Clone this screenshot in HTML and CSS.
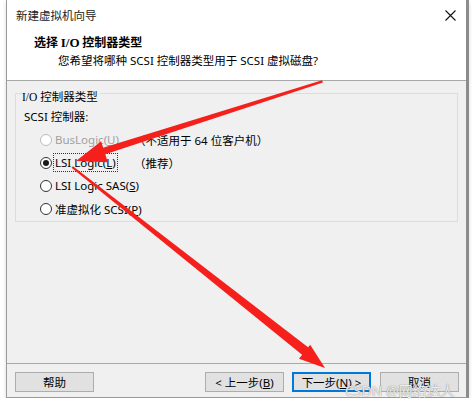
FILE: index.html
```html
<!DOCTYPE html>
<html lang="zh-CN">
<head>
    <meta charset="UTF-8">
    <title>新建虚拟机向导</title>
    <link rel="stylesheet" href="styles.css">
</head>
<body>
    <div class="window">
        <div class="header">
            <div class="titlebar">
                <span class="title">新建虚拟机向导</span>
                <svg class="close" width="11" height="11" viewBox="0 0 11 11">
                    <path d="M0.5 0.5 L10.5 10.5 M10.5 0.5 L0.5 10.5" stroke="#111" stroke-width="1.1" fill="none"/>
                </svg>
            </div>
            <div class="heading">选择 <span class="serif">I/O</span> 控制器类型</div>
            <div class="subtitle">您希望将哪种 SCSI 控制器类型用于 SCSI 虚拟磁盘?</div>
        </div>

        <div class="content">
            <div class="group">
                <div class="group-label"><span class="serif">I/O</span> 控制器类型</div>
                <div class="group-sub">SCSI 控制器:</div>
                <div class="options">
                    <div class="option disabled"><span class="radio"></span><span>BusLogic(<u>U</u>)</span></div>
                    <div class="note">（不适用于 64 位客户机）</div>

                    <div class="option"><span class="radio checked"></span><span class="focus">LSI Logic(<u>L</u>)</span></div>
                    <div class="note">（推荐）</div>

                    <div class="option"><span class="radio"></span><span>LSI Logic SAS(<u>S</u>)</span></div>
                    <div class="note"></div>

                    <div class="option"><span class="radio"></span><span>准虚拟化 SCSI(<u>P</u>)</span></div>
                    <div class="note"></div>
                </div>
            </div>
        </div>

        <div class="footer">
            <div class="btn">帮助</div>
            <div class="spacer"></div>
            <div class="btn">&lt; 上一步(<u>B</u>)</div>
            <div class="btn default">下一步(<u>N</u>) &gt;</div>
            <div class="btn cancel">取消</div>
        </div>
    </div>

    <!-- red annotation arrows drawn over the dialog -->
    <svg class="arrows" width="474" height="406" viewBox="0 0 474 406">
        <polygon points="322,80.2 323,82.6 103,155 99,149" fill="#f5201c"/>
        <polygon points="76,161 101.1,141.2 107.9,162.2" fill="#f5201c"/>
        <polygon points="71.5,167.8 73,166.2 309,348 303,355.5" fill="#f5201c"/>
        <polygon points="325,368 299,358.8 310.2,344.8" fill="#f5201c"/>
    </svg>

    <div class="watermark">CSDN @网络达人</div>
</body>
</html>
```

FILE: styles.css
```css
body {
    margin: 0;
    background: #ffffff;
    font-family: "Noto Sans", "Noto Sans CJK SC", sans-serif;
    font-size: 12px;
    color: #000;
    overflow: hidden;
}

.window {
    margin-left: 6px;
    width: 463px;
    height: 398px;
    box-sizing: border-box;
    border-left: 1px solid #9a9a9a;
    border-right: 3px solid #8c8c8c;
    border-bottom: 1px solid #9a9a9a;
    background: #f0f0f0;
    box-shadow: 0 2px 4px rgba(0, 0, 0, 0.15);
    display: flex;
    flex-direction: column;
}

.serif {
    font-family: "Liberation Serif", serif;
}

/* white header */
.header {
    background: #ffffff;
    height: 81px;
    box-sizing: border-box;
    border-bottom: 1px solid #a8a8a8;
}
.titlebar {
    height: 30px;
    display: flex;
    align-items: center;
    padding: 0 8px 0 9px;
}
.title {
    flex: 1;
    font-size: 11.5px;
    color: #222;
}
.close {
    margin-right: 2px;
}
.heading {
    margin-top: 4px;
    padding-left: 27px;
    line-height: 16px;
    font-weight: bold;
    font-family: "Noto Sans CJK SC", sans-serif;
}
.heading .serif {
    font-size: 13px;
}
.subtitle {
    margin-top: 2px;
    padding-left: 51px;
    line-height: 16px;
    font-size: 11.5px;
}

/* grey body */
.content {
    flex: 1;
    padding-top: 12px;
}
.group {
    margin: 0 8px;
    height: 129px;
    box-sizing: border-box;
    border: 1px solid #dcdcdc;
    padding-left: 6px;
}
.group-label {
    width: fit-content;
    margin-top: -4px;
    line-height: 14px;
    padding-right: 2px;
    background: #f0f0f0;
    font-size: 11.5px;
}
.group-sub {
    margin: 6px 0 0 2px;
    line-height: 14px;
    font-size: 11.5px;
}
.options {
    margin: 4px 0 0 18px;
    display: grid;
    grid-template-columns: 94px auto;
    grid-auto-rows: 23px;
    align-items: center;
    font-size: 11.5px;
}
.option {
    display: flex;
    align-items: center;
    gap: 3px;
    white-space: nowrap;
}
.option.disabled {
    color: #a0a0a0;
}
.radio {
    flex-shrink: 0;
    width: 12px;
    height: 12px;
    box-sizing: border-box;
    border: 1px solid #333;
    border-radius: 50%;
    background: #fff;
    display: flex;
    align-items: center;
    justify-content: center;
}
.disabled .radio {
    border-color: #bcbcbc;
}
.radio.checked::after {
    content: "";
    width: 6px;
    height: 6px;
    border-radius: 50%;
    background: #1a1a1a;
}
.focus {
    outline: 1px dotted #333;
    outline-offset: 1px;
}

/* button row */
.footer {
    height: 34px;
    box-sizing: border-box;
    border-top: 1px solid #a8a8a8;
    padding: 8px 7px 0 8px;
    display: flex;
    align-items: flex-start;
    gap: 8px;
}
.spacer {
    flex: 1;
}
.btn {
    width: 79px;
    height: 20px;
    box-sizing: border-box;
    border: 1px solid #adadad;
    background: #e1e1e1;
    display: flex;
    align-items: center;
    justify-content: center;
    font-size: 11.5px;
}
.btn.default {
    border: 2px solid #0078d7;
}
.btn.cancel {
    margin-left: 1px;
}

.arrows {
    position: absolute;
    left: 0;
    top: 0;
    pointer-events: none;
}

.watermark {
    position: absolute;
    left: 345px;
    top: 382px;
    font-size: 14px;
    line-height: 18px;
    color: rgba(255, 255, 255, 0.85);
    text-shadow: 0 0 1px rgba(130, 130, 130, 0.9), 0 0 1px rgba(130, 130, 130, 0.6);
    pointer-events: none;
}
```
